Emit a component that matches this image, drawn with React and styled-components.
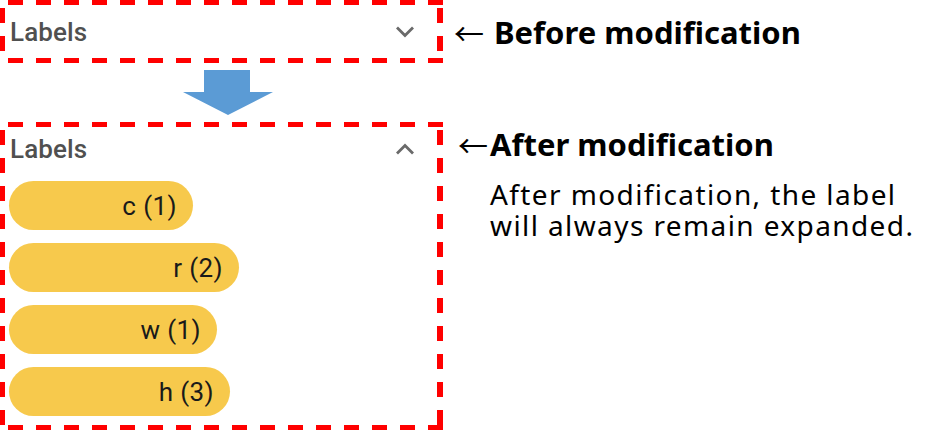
import React from 'react'
import styled, { createGlobalStyle } from 'styled-components'

const GlobalStyle = createGlobalStyle`
  html, body {
    margin: 0;
    padding: 0;
    background: #ffffff;
  }
  body {
    font-family: Roboto, "Noto Sans", sans-serif;
  }
`

const Page = styled.div`
  width: 941px;
  height: 430px;
  overflow: hidden;
  display: flex;
  flex-direction: column;
`

const Row = styled.div`
  display: flex;
  align-items: ${(p) => (p.$top ? 'flex-start' : 'center')};
`

const dash = 'repeating-linear-gradient'

const Panel = styled.div`
  box-sizing: border-box;
  width: 443px;
  height: ${(p) => p.$height}px;
  flex-shrink: 0;
  background:
    ${dash}(90deg, #ff0000 0 15px, transparent 15px 28px) 8px 0 / 100% 5px no-repeat,
    ${dash}(90deg, #ff0000 0 15px, transparent 15px 28px) 8px 100% / 100% 5px no-repeat,
    ${dash}(180deg, #ff0000 0 15px, transparent 15px 28px) 0 8px / 5px 100% no-repeat,
    ${dash}(180deg, #ff0000 0 15px, transparent 15px 28px) 100% 8px / 6px 100% no-repeat;
  display: flex;
  flex-direction: column;
`

const Header = styled.div`
  display: flex;
  align-items: center;
  justify-content: space-between;
  height: ${(p) => p.$height}px;
  padding: 0 28px 0 10px;
`

const HeaderTitle = styled.span`
  font-family: Roboto, sans-serif;
  font-weight: 500;
  font-size: 26px;
  color: #505050;
  letter-spacing: 0.1px;
`

const PillList = styled.div`
  display: flex;
  flex-direction: column;
  align-items: flex-start;
  gap: 13px;
  padding-left: 9px;
  margin-top: ${(p) => p.$gap}px;
`

const Pill = styled.div`
  box-sizing: border-box;
  width: ${(p) => p.$width}px;
  height: 49px;
  border-radius: 25px;
  background: #f7c94c;
  display: flex;
  align-items: center;
  justify-content: flex-end;
  padding-right: 16px;
  font-family: Roboto, sans-serif;
  font-size: 26px;
  color: #1a1a1a;
  letter-spacing: 0.4px;
`

const Caption = styled.div`
  display: flex;
  align-items: center;
  gap: ${(p) => p.$gap}px;
  margin-left: ${(p) => p.$left}px;
  font-family: "Noto Sans", "Noto Sans CJK KR", sans-serif;
  font-weight: 700;
  font-size: 31px;
  color: #000;
  white-space: nowrap;
`

const LeftArrow = styled.span`
  font-weight: 400;
  font-size: 30px;
`

const Notes = styled.div`
  display: flex;
  flex-direction: column;
`

const Desc = styled.div`
  margin: 13px 0 0 47px;
  display: flex;
  flex-direction: column;
`

const DescLine = styled.span`
  display: block;
  height: 31px;
  font-family: "Noto Sans", "Noto Sans CJK KR", sans-serif;
  font-size: 28px;
  line-height: 31px;
  letter-spacing: 1.4px;
  color: #000;
  white-space: nowrap;
`

const ArrowSlot = styled.div`
  height: 59px;
  padding-left: 182px;
  padding-top: 6px;
  box-sizing: border-box;
`

const Chevron = ({ up }) => (
  <svg width="20" height="12" viewBox="0 0 20 12">
    <polyline
      points={up ? '2,10.5 10,2.5 18,10.5' : '2,1.5 10,9.5 18,1.5'}
      fill="none"
      stroke="#6a6a6a"
      strokeWidth="2.8"
    />
  </svg>
)

const DownArrow = () => (
  <svg width="92" height="47" viewBox="0 0 92 47">
    <polygon points="22,1 68,1 68,23 91,23 46,46 1,23 22,23" fill="#5b9bd5" />
  </svg>
)

const labels = [
  { name: 'c', count: 1, width: 184 },
  { name: 'r', count: 2, width: 230 },
  { name: 'w', count: 1, width: 208 },
  { name: 'h', count: 3, width: 221 },
]

export default function App() {
  return (
    <Page>
      <GlobalStyle />
      <Row>
        <Panel $height={63}>
          <Header $height={63}>
            <HeaderTitle>Labels</HeaderTitle>
            <Chevron />
          </Header>
        </Panel>
        <Caption $left={11} $gap={10}>
          <LeftArrow>←</LeftArrow>
          Before modification
        </Caption>
      </Row>
      <ArrowSlot>
        <DownArrow />
      </ArrowSlot>
      <Row $top>
        <Panel $height={308}>
          <Header $height={54}>
            <HeaderTitle>Labels</HeaderTitle>
            <Chevron up />
          </Header>
          <PillList $gap={5}>
            {labels.map((l) => (
              <Pill key={l.name} $width={l.width}>
                {l.name} ({l.count})
              </Pill>
            ))}
          </PillList>
        </Panel>
        <Notes>
          <Caption $left={15} $gap={2}>
            <LeftArrow>←</LeftArrow>
            After modification
          </Caption>
          <Desc>
            <DescLine>After modification, the label</DescLine>
            <DescLine>will always remain expanded.</DescLine>
          </Desc>
        </Notes>
      </Row>
    </Page>
  )
}
